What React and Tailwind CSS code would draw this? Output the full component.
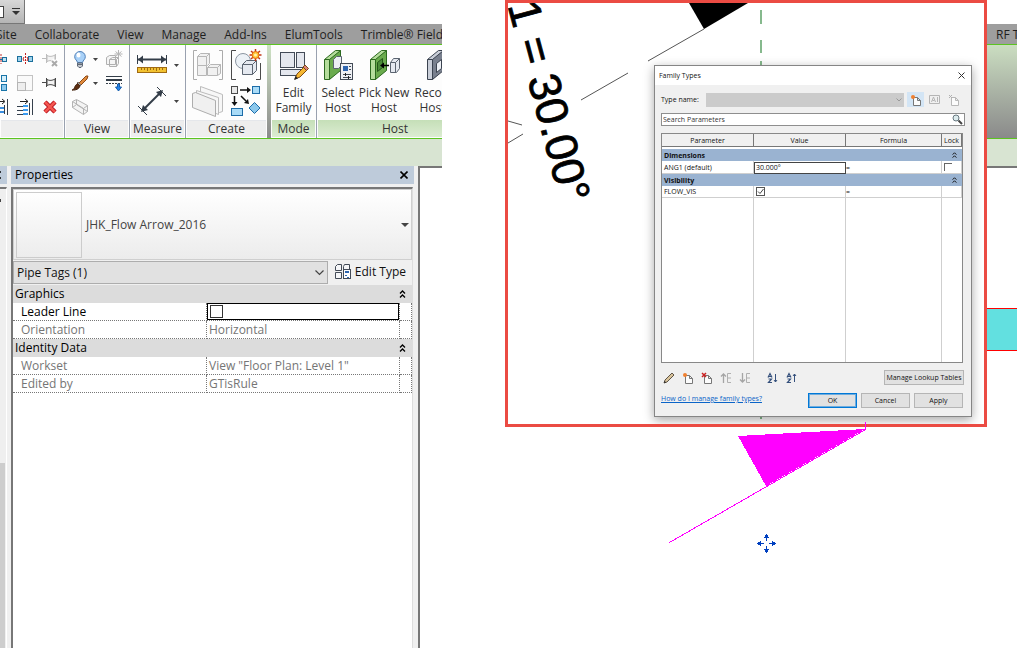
import clsx from 'clsx';

const TABS = ['Site', 'Collaborate', 'View', 'Manage', 'Add-Ins', 'ElumTools', 'Trimble® Field'];

function Caret() {
  return (
    <svg width="5" height="3" viewBox="0 0 5 3" className="shrink-0">
      <path d="M0 0h5L2.5 3z" fill="#444" />
    </svg>
  );
}

function Icon({ size = 18, children }) {
  return (
    <svg width={size} height={size} viewBox={`0 0 ${size} ${size}`} fill="none" className="block shrink-0">
      {children}
    </svg>
  );
}

/* ---------- ribbon icons ---------- */

function SplitEdgeIcon() {
  return (
    <svg width="8" height="16" viewBox="0 0 8 16" fill="none" className="block">
      <path d="M1 3v10" stroke="#c03030" strokeDasharray="2 1" />
      <path d="M0 8.500h3" stroke="#1b6f9c" />
      <rect x="2.500" y="6.500" width="4" height="4" fill="#bfe3f5" stroke="#1b6f9c" />
    </svg>
  );
}

function ArrayIcon() {
  return (
    <svg width="8" height="18" viewBox="0 0 8 18" fill="none" className="block">
      <rect x="1.500" y="1.500" width="5" height="6" fill="#d5effa" stroke="#1874a8" />
      <rect x="1.500" y="10.500" width="5" height="6" fill="#8cc8ec" stroke="#1874a8" />
    </svg>
  );
}

function TrimIcon() {
  return (
    <svg width="8" height="18" viewBox="0 0 8 18" fill="none" className="block">
      <path d="M0 3.500h4M2 1l3 2.500L2 6" stroke="#222" />
      <path d="M0 10h4M0 14h4" stroke="#3b8fe0" strokeWidth="2" />
      <path d="M4.500 7v9M7.500 1v16" stroke="#36404c" />
    </svg>
  );
}

function MirrorIcon() {
  return (
    <Icon>
      <path d="M9.500 3v12" stroke="#c02020" strokeDasharray="2 1" />
      <rect x="1.500" y="6.500" width="4" height="5" fill="#9fd3ec" stroke="#1b6f9c" />
      <rect x="12.500" y="6.500" width="4" height="5" fill="#9fd3ec" stroke="#1b6f9c" />
      <path d="M8 7l-1 2 1 2M11 7l1 2-1 2" stroke="#c02020" />
    </Icon>
  );
}

function ScaleIcon() {
  return (
    <Icon>
      <rect x="1.500" y="1.500" width="15" height="15" fill="#fafafa" stroke="#c3c3c3" />
      <rect x="1.500" y="8.500" width="8" height="8" fill="#eee" stroke="#b5b5b5" />
    </Icon>
  );
}

function ExtendIcon() {
  return (
    <Icon>
      <path d="M4 3.500h8M9 1l3 2.500L9 6" stroke="#222" />
      <path d="M1 8.500h10M1 12.500h10M1 16.500h10" stroke="#333f4d" />
      <path d="M7 8h5M7 12h5M7 16h5" stroke="#3b9bf0" strokeWidth="2" />
      <path d="M13.500 5v12M16.500 1v16" stroke="#36404c" />
    </Icon>
  );
}

function PinShape({ color }) {
  return (
    <>
      <path d="M1 8.500h4M5.500 4v9M14.500 4v9" stroke={color} />
      <path d="M6 5.500c2.500 1.500 5.500 1 8-.5v7c-2.500-1.500-5.500-2-8-.5z" fill="#f3f3f3" stroke={color} />
    </>
  );
}

function UnpinIcon() {
  return (
    <Icon>
      <PinShape color="#bdbdbd" />
      <path d="M11 10l6 6M17 10l-6 6" stroke="#fff" strokeWidth="4" />
      <path d="M11 11l5 5M16 11l-5 5" stroke="#aaa" strokeWidth="2" />
    </Icon>
  );
}

function DeleteIcon() {
  return (
    <Icon>
      <path d="M4 4l10 10M14 4L4 14" stroke="#b3121d" strokeWidth="4.500" />
      <path d="M4 4l10 10M14 4L4 14" stroke="#f4564f" strokeWidth="2.500" />
    </Icon>
  );
}

function BulbIcon() {
  return (
    <Icon>
      <path d="M9 1.500a5.300 5.300 0 0 0-5.300 5.200c0 3 2.300 3.300 2.800 5.800h5c.5-2.500 2.800-2.800 2.800-5.800A5.300 5.300 0 0 0 9 1.500z" fill="#a8d1f8" stroke="#4e7fb8" />
      <ellipse cx="7.500" cy="5" rx="2" ry="2.500" fill="#fff" />
      <path d="M6.500 13h5v3l-1.500 1.500H8L6.500 16z" fill="#c5c9cf" stroke="#5e6877" />
      <path d="M6.500 14.500h5" stroke="#5e6877" />
    </Icon>
  );
}

function BrushIcon() {
  return (
    <Icon>
      <path d="M8 9l7-7 2 0-1 3-6 6z" fill="#e08a3c" stroke="#8c4a17" />
      <path d="M7 8l3 3-1 1-3-3z" fill="#ddd" stroke="#777" />
      <path d="M1 16c3 0 2-5 6-6.500l2 2.500c-1 3-4 4.500-8 4z" fill="#5d2f12" stroke="#43220d" />
    </Icon>
  );
}

function HiddenBoxesIcon() {
  return (
    <Icon>
      <path d="M1.500 7.500l3-2h6v9h-9zM4.500 9.500h7v7h-7zM4.500 9.500l3-2h6l-2 2M13.500 7.500v6l-2 3" fill="#f5f5f5" stroke="#b0b0b0" />
      <path d="M13.500 0v8M9.500 4h8M10.500 1.500l6 5M16.500 1.500l-6 5" stroke="#b5b5b5" />
    </Icon>
  );
}

function LineWeightIcon() {
  return (
    <Icon>
      <path d="M1 2.500h16" stroke="#333d48" />
      <path d="M1 6h16" stroke="#333d48" strokeWidth="2" />
      <path d="M1 9.500h16" stroke="#333d48" strokeDasharray="2 1" />
      <path d="M14.500 10v3h2l-3 4-3-4h2v-3z" fill="#2684ea" stroke="#155cab" />
    </Icon>
  );
}

function WireBoxIcon() {
  return (
    <Icon>
      <path d="M1.500 3.500l4-2 11 6v6l-4 3-11-7z" fill="#f4f4f4" stroke="#b4b4b4" />
      <path d="M1.500 3.500l11 7v6M12.500 10.500l4-3M5.500 1.500v5l11 7M1.500 9.500l4-3" stroke="#b4b4b4" />
    </Icon>
  );
}

function RulerIcon() {
  return (
    <Icon size={32}>
      <path d="M2 10.500h28" stroke="#333d48" strokeWidth="2" />
      <path d="M1.500 6v9M30.500 6v9" stroke="#333d48" />
      <path d="M2 10.500l5-4v8zM30 10.500l-5-4v8z" fill="#333d48" />
      <rect x="1.500" y="18.500" width="29" height="5" fill="#f2c230" stroke="#a06a12" />
      <path d="M5.500 19v2M8.500 19v2M11.500 19v3M14.500 19v2M17.500 19v2M20.500 19v3M23.500 19v2M26.500 19v2" stroke="#a06a12" />
    </Icon>
  );
}

function AlignedDimIcon() {
  return (
    <Icon size={32}>
      <path d="M7 25L25 7" stroke="#333d48" strokeWidth="2" />
      <path d="M2 21l9 9M21 2l9 9" stroke="#333d48" />
      <path d="M5 27l2-7 5 5zM27 5l-7 2 5 5z" fill="#333d48" />
    </Icon>
  );
}

function GroupIcon() {
  return (
    <Icon size={32}>
      <path d="M5 1.500H1.500v29H5M27 1.500h3.500v29H27" stroke="#ababab" />
      <path d="M5.500 7.500l3-3h9v10l-2 2h-10zM5.500 7.500h9v9M14.500 7.500l3-3" fill="#f1f1f1" stroke="#b6b6b6" />
      <path d="M5.500 16.500h9v10h-9zM15.500 18.500l3-3h10v9l-3 2h-10zM15.500 18.500h10v8M25.500 18.500l3-3" fill="#f1f1f1" stroke="#b6b6b6" />
    </Icon>
  );
}

function SimilarIcon() {
  return (
    <Icon size={32}>
      <path d="M8.500 1.500l22 8v17l-3 1-19-8z" fill="#f7f7f7" stroke="#bcbcbc" />
      <path d="M4.500 5.500l22 7v17l-22-9z" fill="#f7f7f7" stroke="#bcbcbc" />
      <path d="M.5 8.500l3-1 20 8v16l-23-9z" fill="#f0f0f0" stroke="#adadad" />
    </Icon>
  );
}

function CreateGroupIcon() {
  return (
    <Icon size={32}>
      <path d="M6 1.500H1.500v29H6M26 30.500h4.500V14" stroke="#4a4a4a" />
      <circle cx="13" cy="12" r="7.500" fill="#edf2f7" stroke="#8b95a1" />
      <path d="M12.500 15.500l4-4h10v10l-4 4h-10zM12.500 15.500h10v10M22.500 15.500l4-4" fill="#e5e9f0" stroke="#5b6470" />
      <path d="M25.500 0v12M19.500 6h12M21 2l9 8M30 2l-9 8" stroke="#c23616" strokeWidth="1.500" />
      <circle cx="25.500" cy="6" r="3.500" fill="#ffc234" stroke="#e46b12" />
      <circle cx="25.500" cy="6" r="1.500" fill="#fff3b0" />
    </Icon>
  );
}

function AssemblyIcon() {
  return (
    <Icon size={32}>
      <rect x="1.500" y="1.500" width="6" height="7" fill="#e8e8e8" stroke="#4a4a4a" />
      <rect x="22.500" y="1.500" width="7" height="7" fill="#a9dbf7" stroke="#1c6ca8" />
      <rect x="1.500" y="23.500" width="11" height="7" fill="#a9dbf7" stroke="#1c6ca8" />
      <path d="M24.500 17.500l5.500 5.500-5.500 5.500L19 23z" fill="#8cc8ec" stroke="#1c6ca8" />
      <path d="M10 5h8M4.500 11v6M11 11l5 5" stroke="#111" strokeWidth="1.500" />
      <path d="M21 5l-4-3v6zM4.500 21l-3-4h6zM19 19l-5-1 4-4z" fill="#111" />
    </Icon>
  );
}

function EditFamilyIcon() {
  return (
    <Icon size={32}>
      <rect x="2.500" y="3.500" width="14" height="15" fill="#e4e7ee" stroke="#434b57" />
      <rect x="18.500" y="3.500" width="8" height="15" fill="#e4e7ee" stroke="#434b57" />
      <rect x="2.500" y="20.500" width="20" height="6" fill="#e4e7ee" stroke="#434b57" />
      <path d="M17 30l2-5 8-8 3 3-8 8z" fill="#f5b731" stroke="#7d4a14" />
      <path d="M27 16l3.500 3.500-2 2-3.500-3.500z" fill="#d9807a" stroke="#7d4a14" />
      <path d="M16 31l1.500-4 2.500 2.500z" fill="#222" />
    </Icon>
  );
}

function WallShape({ front, side, edge }) {
  return (
    <>
      <path d="M2.500 10.500l11-9h5l-4 4v18l-7 7h-5z" fill={front} stroke={edge} />
      <path d="M7.500 10.500l11-9v20l-11 9z" fill={side} stroke={edge} />
      <path d="M2.500 10.500h5" stroke={edge} />
    </>
  );
}

function SelectHostIcon() {
  return (
    <Icon size={32}>
      <WallShape front="#b5dd9c" side="#6aab4d" edge="#2c6a1f" />
      <path d="M11.500 10.500l3-3h5v9l-3 3h-5z" fill="#eceff4" stroke="#5b6470" />
      <rect x="18.500" y="14.500" width="12" height="16" fill="#eff1f5" stroke="#434b57" />
      <rect x="21" y="17" width="5" height="5" fill="#2f66b0" />
      <path d="M27 17.500h2M27 20.500h2M21 25.500h8M21 28.500h8" stroke="#434b57" />
      <path d="M23.500 24v3M26.500 27v3" stroke="#222" />
    </Icon>
  );
}

function PickHostIcon() {
  return (
    <Icon size={32}>
      <WallShape front="#b5dd9c" side="#6aab4d" edge="#2c6a1f" />
      <path d="M9.500 13.500l5-4v9l-5 4z" fill="#4c8c3a" stroke="#24561a" />
      <path d="M14 16.500h7" stroke="#000" strokeWidth="1.500" />
      <path d="M12 16.500l4-3v6z" fill="#000" />
      <path d="M22.500 13.500l3-4h6v10l-3 4h-6zM22.500 13.500h5v10M27.500 13.500l4-4" fill="#e5e9f0" stroke="#5b6470" />
    </Icon>
  );
}

function ReconcileIcon() {
  return (
    <Icon size={32}>
      <WallShape front="#c9ced8" side="#79808e" edge="#3b4350" />
      <path d="M11.500 14.500l5-4v9l-5 4z" fill="#eceff4" stroke="#3b4350" />
    </Icon>
  );
}

/* ---------- ribbon ---------- */

function IconButton({ label, children }) {
  return (
    <button type="button" aria-label={label} className="flex h-6 items-center justify-center">
      {children}
    </button>
  );
}

function BigButton({ lines, className, children }) {
  return (
    <button type="button" className={clsx('flex shrink-0 flex-col items-center pt-1 leading-[15px]', className)}>
      {children}
      <span className="mt-1 whitespace-nowrap">
        {lines[0]}
        <br />
        {lines[1]}
      </span>
    </button>
  );
}

function Panel({ title, className, green, children }) {
  return (
    <section className={clsx('flex h-[93px] shrink-0 flex-col border-gray-400 bg-[#fdfdfd]', className)}>
      <div className="h-[75px]">{children}</div>
      <h2
        className={clsx(
          'mx-px h-[17px] text-center leading-4',
          green ? 'bg-linear-to-b from-[#c5dfb8] to-[#dcecd2] pt-px' : 'border-t border-gray-200 bg-[#eeeeee]'
        )}
      >
        {title}
      </h2>
    </section>
  );
}

function Ribbon() {
  return (
    <div className="w-[442px] shrink-0 overflow-hidden">
      <nav className="flex h-5 gap-[18px] bg-[#9e9e9e] text-[#1e1e1e]">
        {TABS.map((tab) => (
          <a key={tab} href="#tab" className="whitespace-nowrap leading-[21px] first:-ml-1">
            {tab}
          </a>
        ))}
      </nav>
      <div className="flex border-y border-[#5cc421] text-[#333]">
        <Panel className="w-[65px] border-r">
          <div className="grid grid-cols-[12px_25px_26px] pt-0.5">
            <button type="button" aria-label="Split" className="flex h-6 items-center"><SplitEdgeIcon /></button>
            <IconButton label="Mirror"><MirrorIcon /></IconButton>
            <IconButton label="Unpin"><UnpinIcon /></IconButton>
            <button type="button" aria-label="Array" className="flex h-6 items-center"><ArrayIcon /></button>
            <IconButton label="Scale"><ScaleIcon /></IconButton>
            <IconButton label="Pin"><Icon><PinShape color="#4a4a4a" /></Icon></IconButton>
            <button type="button" aria-label="Trim" className="flex h-6 items-center"><TrimIcon /></button>
            <IconButton label="Extend"><ExtendIcon /></IconButton>
            <IconButton label="Delete"><DeleteIcon /></IconButton>
          </div>
        </Panel>
        <Panel title="View" className="w-[65px] border-r">
          <div className="grid grid-cols-[22px_9px_28px] pt-0.5 pl-1">
            <IconButton label="Hide"><BulbIcon /></IconButton>
            <IconButton label="Hide options"><Caret /></IconButton>
            <IconButton label="Displace"><HiddenBoxesIcon /></IconButton>
            <IconButton label="Override"><BrushIcon /></IconButton>
            <IconButton label="Override options"><Caret /></IconButton>
            <IconButton label="Linework"><LineWeightIcon /></IconButton>
            <IconButton label="Selection box"><WireBoxIcon /></IconButton>
          </div>
        </Panel>
        <Panel title="Measure" className="w-14 border-r">
          <div className="pt-0.5 pl-1.5">
            <button type="button" aria-label="Measure" className="flex h-9 items-center gap-1.5"><RulerIcon /><Caret /></button>
            <button type="button" aria-label="Dimension" className="flex h-9 items-center gap-1.5"><AlignedDimIcon /><Caret /></button>
          </div>
        </Panel>
        <Panel title="Create" className="w-[81px]">
          <div className="grid grid-cols-[32px_32px] items-center gap-x-1.5 gap-y-1 pt-1 pl-1.5">
            <button type="button" aria-label="Assembly"><GroupIcon /></button>
            <button type="button" aria-label="Create group"><CreateGroupIcon /></button>
            <button type="button" aria-label="Parts"><SimilarIcon /></button>
            <button type="button" aria-label="Create similar"><AssemblyIcon /></button>
          </div>
        </Panel>
        <div className="w-1 shrink-0 bg-linear-to-b from-[#cfe3c5] to-[#8b8b8b]" />
        <Panel title="Mode" green className="w-[46px] border-r">
          <BigButton lines={['Edit', 'Family']} className="w-full"><EditFamilyIcon /></BigButton>
        </Panel>
        <Panel title="Host" green className="w-[156px]">
          <div className="flex">
            <BigButton lines={['Select', 'Host']} className="w-[42px]"><SelectHostIcon /></BigButton>
            <BigButton lines={['Pick New', 'Host']} className="w-[50px]"><PickHostIcon /></BigButton>
            <BigButton lines={['Reconcile', 'Hosting']} className="w-16"><ReconcileIcon /></BigButton>
          </div>
        </Panel>
      </div>
      <div className="h-[27px] bg-[#d8e4d2]" />
    </div>
  );
}

function RibbonEnd() {
  return (
    <div className="w-[34px] shrink-0 overflow-hidden">
      <div className="h-5 bg-[#9e9e9e] pl-[13px] leading-[21px] whitespace-nowrap text-[#1e1e1e]">RF Tools</div>
      <div className="h-[95px] border-y border-[#5cc421] bg-linear-to-b from-[#cbdec1] to-[#8a8a8a]" />
      <div className="h-[27px] bg-[#d8e4d2]" />
    </div>
  );
}

/* ---------- properties palette ---------- */

function Chevrons({ className }) {
  return (
    <svg width="7" height="8" viewBox="0 0 7 8" fill="none" className={className}>
      <path d="M1 3.500L3.500 1 6 3.500M1 7.500L3.500 5 6 7.500" stroke="currentColor" strokeWidth="1.300" />
    </svg>
  );
}

function GroupRow({ title }) {
  return (
    <tr className="h-[18px] bg-[#dcdcdc]">
      <th colSpan={3} scope="colgroup" className="p-0 font-normal">
        <div className="flex items-center justify-between pr-1.5 pl-0.5 leading-4">
          {title}
          <Chevrons />
        </div>
      </th>
    </tr>
  );
}

function PropRow({ name, children, active }) {
  return (
    <tr className={clsx('h-[18px]', active ? 'text-black' : 'text-[#757575]')}>
      <th scope="row" className="border-r border-b border-dotted border-[#777] p-0 pl-2 font-normal">{name}</th>
      <td className="border-r border-b border-dotted border-[#777] p-0">{children}</td>
      <td className="border-r border-b border-dotted border-[#777] p-0" />
    </tr>
  );
}

function Properties() {
  return (
    <aside className="flex w-[403px] shrink-0 flex-col">
      <header className="flex h-[18px] items-center justify-between bg-[#becbda] pr-0.5 pl-1 text-black">
        <h2>Properties</h2>
        <button type="button" aria-label="Close" className="p-1">
          <svg width="8" height="8" viewBox="0 0 8 8" className="block">
            <path d="M.5.500l7 7M7.500.500l-7 7" stroke="#000" strokeWidth="1.600" />
          </svg>
        </button>
      </header>
      <div className="mt-[3px] mr-px flex-1 border-t-2 border-r border-l-2 border-t-[#777] border-r-[#ddd] border-l-[#777] bg-white">
        <button type="button" className="flex h-[71px] w-full items-center border border-[#cfcfcf] bg-linear-to-b from-white to-[#ececec] px-0.5 text-left text-[#444]">
          <span className="h-[66px] w-[66px] border border-[#ccc]" />
          <span className="flex-1 pl-1">JHK_Flow Arrow_2016</span>
          <svg width="8" height="4" viewBox="0 0 8 4"><path d="M0 0h8L4 4z" fill="#444" /></svg>
        </button>
        <div className="flex h-[25px] items-center gap-1.5 bg-[#f0f0f0] pr-1.5">
          <div className="relative flex-1">
            <select aria-label="Filter" className="block h-[23px] w-full appearance-none rounded-none border border-[#adadad] bg-[#e1e1e1] pl-[3px] text-[#111]">
              <option>Pipe Tags (1)</option>
            </select>
            <svg width="9" height="6" viewBox="0 0 9 6" fill="none" className="pointer-events-none absolute top-[9px] right-1">
              <path d="M.5.500l4 4 4-4" stroke="#444" strokeWidth="1.200" />
            </svg>
          </div>
          <button type="button" className="flex items-center gap-1 pb-0.5 text-[#111]">
            <svg width="17" height="17" viewBox="0 0 17 17" fill="none">
              <path d="M1.500 3.500l2-2h4v6h-6zM9.500 3.500l1-2h5v5h-6zM1.500 9.500h6v6h-6z" fill="#f5f6f8" stroke="#434b57" />
              <rect x="9.500" y="6.500" width="7" height="9" fill="#fff" stroke="#434b57" />
              <rect x="11" y="8" width="4" height="2" fill="#2f66b0" />
              <path d="M11 12.500h2M13 14.500h2" stroke="#2f66b0" />
            </svg>
            Edit Type
          </button>
        </div>
        <table className="w-full table-fixed border-separate border-spacing-0 text-left leading-4">
          <colgroup>
            <col className="w-[194px]" />
            <col />
            <col className="w-3" />
          </colgroup>
          <tbody>
            <GroupRow title="Graphics" />
            <PropRow name={<label htmlFor="leader">Leader Line</label>} active>
              <div className="flex h-[17px] items-center border border-black pl-0.5">
                <input id="leader" type="checkbox" className="h-[13px] w-[13px] appearance-none border border-[#333] bg-white" />
              </div>
            </PropRow>
            <PropRow name="Orientation"><span className="pl-0.5">Horizontal</span></PropRow>
            <GroupRow title="Identity Data" />
            <PropRow name="Workset"><span className="pl-0.5">View "Floor Plan: Level 1"</span></PropRow>
            <PropRow name="Edited by"><span className="pl-0.5">GTisRule</span></PropRow>
          </tbody>
        </table>
      </div>
    </aside>
  );
}

function BrowserEdge() {
  return (
    <div className="mr-1 flex w-[7px] shrink-0 flex-col overflow-hidden bg-[#f0f0f0]">
      <div className="flex h-[18px] items-center bg-[#becbda]">
        <svg width="2" height="8" viewBox="0 0 2 8"><path d="M0 1h1M0 7h1" stroke="#000" strokeWidth="1.500" /></svg>
      </div>
      <div className="mt-[3px] flex flex-1 flex-col border-t-2 border-r border-t-[#777] border-r-white">
        <div className="h-[274px] bg-[#efefef] pt-2.5"><div className="h-[3px] w-px bg-[#444]" /></div>
        <div className="w-[5px] flex-1 bg-[#cdcdcd]" />
      </div>
    </div>
  );
}

/* ---------- family types dialog ---------- */

function PageShape({ color = '#777', children }) {
  return (
    <svg width="12" height="12" viewBox="0 0 12 12" fill="none" className="block">
      <path d="M3.500 3.500h4l3 3v5h-7zM7.500 3.500v3h3" fill="#fcfcfc" stroke={color} />
      {children}
    </svg>
  );
}

function SortArrow({ up }) {
  return <path d={up ? 'M9.500 10V2M8 4l1.500-2L11 4' : 'M9.500 2v8M8 8l1.500 2L11 8'} stroke="#35507c" />;
}

function SortIcon({ up }) {
  return (
    <svg width="12" height="12" viewBox="0 0 12 12" fill="none" className="block">
      <path d="M2 5.500L4 1.500l2 4M3 4.500h2M2.500 7h3l-3 3.500H6" stroke="#35507c" strokeWidth="1.200" />
      <SortArrow up={up} />
    </svg>
  );
}

function MoveIcon({ up }) {
  return (
    <svg width="12" height="12" viewBox="0 0 12 12" fill="none" className="block">
      <path d={up ? 'M3.500 11V2M1 4.500L3.500 2 6 4.500' : 'M3.500 1v9M1 7.500L3.500 10 6 7.500'} stroke="#a5a5a5" strokeWidth="1.300" />
      <path d="M11 1.500H7.500v9H11M7.500 6H11" stroke="#b0b0b0" />
    </svg>
  );
}

function DialogButton({ primary, className, children }) {
  return (
    <button
      type="button"
      className={clsx(
        'h-[15px] border bg-[#e1e1e1] text-center leading-[13px]',
        primary ? 'border-[#0078d7] outline outline-[#0078d7]/50 -outline-offset-2' : 'border-[#b5b5b5]',
        className
      )}
    >
      {children}
    </button>
  );
}

function ParamGroup({ title }) {
  return (
    <tr className="h-3 bg-[#9ab3d1]">
      <th colSpan={4} scope="colgroup" className="p-0 font-bold text-[#111]">
        <div className="flex items-center justify-between pr-1 pl-0.5">
          {title}
          <Chevrons className="h-1.5" />
        </div>
      </th>
    </tr>
  );
}

function FamilyTypes() {
  const cell = 'border-r border-b border-[#cfcfcf] p-0';
  const head = 'border-r border-b border-[#777] bg-[#f0f0f0] p-0 text-center font-normal';
  return (
    <div
      role="dialog"
      aria-label="Family Types"
      className="absolute top-[62px] left-[146px] flex h-[352px] w-[318px] flex-col border border-[#858585] bg-[#f0f0f0] text-[7px] leading-[11px] text-[#111] shadow-[0_3px_10px_rgba(0,0,0,0.35)]"
    >
      <header className="flex h-[19px] shrink-0 items-center justify-between bg-white pr-1.5 pl-1">
        <h2>Family Types</h2>
        <button type="button" aria-label="Close">
          <svg width="7" height="7" viewBox="0 0 7 7" className="block"><path d="M.5.500l6 6M6.500.500l-6 6" stroke="#333" /></svg>
        </button>
      </header>
      <div className="flex flex-1 flex-col px-1.5 pt-[7px]">
        <div className="flex h-[15px] items-center">
          <label htmlFor="type-name" className="w-[45px]">Type name:</label>
          <div className="relative mr-[3px] flex-1">
            <select id="type-name" disabled className="block h-3.5 w-full appearance-none bg-[#cbcbcb]" />
            <svg width="6" height="4" viewBox="0 0 6 4" fill="none" className="absolute top-[5px] right-0.5"><path d="M.5.500L3 3 5.500.500" stroke="#999" /></svg>
          </div>
          <div className="flex gap-0.5 pr-[3px]">
            <button type="button" aria-label="New type" className="flex h-[15px] w-[17px] items-center justify-center bg-[#d3e5f5]">
              <PageShape><circle cx="3" cy="3" r="2" fill="#f08030" /></PageShape>
            </button>
            <button type="button" aria-label="Rename type" className="flex h-[15px] w-[17px] items-center justify-center">
              <svg width="11" height="9" viewBox="0 0 11 9" fill="none">
                <path d="M.5.500h10v8H.5zM2.500 7l2-5 2 5M3.500 5.500h2M8.500 2v5" stroke="#b5b5b5" />
              </svg>
            </button>
            <button type="button" aria-label="Delete type" className="flex h-[15px] w-[17px] items-center justify-center">
              <PageShape color="#b8b8b8"><path d="M1 1l3 3M4 1L1 4" stroke="#b0b0b0" /></PageShape>
            </button>
          </div>
        </div>
        <div className="mt-1.5 flex h-[13px] items-center border border-[#8e8e8e] bg-white pr-px">
          <input aria-label="Search Parameters" placeholder="Search Parameters" className="h-[11px] min-w-0 flex-1 pl-px placeholder:text-[#333]" />
          <svg width="11" height="11" viewBox="0 0 11 11" fill="none">
            <circle cx="4" cy="4" r="3" fill="#dcebed" stroke="#687880" />
            <path d="M6.500 6.500l3.500 3.500" stroke="#444" strokeWidth="2" />
          </svg>
        </div>
        <table className="mt-[7px] mr-0.5 table-fixed border-separate border-spacing-0 border border-[#888] bg-white text-left">
          <colgroup>
            <col className="w-[92px]" />
            <col className="w-[92px]" />
            <col />
            <col className="w-5" />
          </colgroup>
          <thead>
            <tr className="h-[13px]">
              <th className={head}>Parameter</th>
              <th className={head}>Value</th>
              <th className={head}>Formula</th>
              <th className={head}>Lock</th>
            </tr>
          </thead>
          <tbody>
            <tr className="h-0.5"><td colSpan={4} className="p-0" /></tr>
            <ParamGroup title="Dimensions" />
            <tr className="h-[13px]">
              <th scope="row" className={clsx(cell, 'pl-0.5 font-normal')}>ANG1 (default)</th>
              <td className="p-0">
                <input aria-label="ANG1 value" defaultValue="30.000°" className="block h-3 w-full border border-[#444] bg-white pl-px" />
              </td>
              <td className={cell}>=</td>
              <td className={cell}>
                <input type="checkbox" aria-label="Lock ANG1" className="ml-0.5 block h-2 w-2 appearance-none border-t border-l border-[#666]" />
              </td>
            </tr>
            <ParamGroup title="Visibility" />
            <tr className="h-3">
              <th scope="row" className={clsx(cell, 'pl-0.5 font-normal')}>FLOW_VIS</th>
              <td className={cell}>
                <label className="relative ml-0.5 block h-[9px] w-[9px]">
                  <input type="checkbox" aria-label="FLOW_VIS" defaultChecked className="block h-[9px] w-[9px] appearance-none border border-[#555] bg-white" />
                  <svg width="9" height="9" viewBox="0 0 9 9" fill="none" className="absolute inset-0"><path d="M2 4.500l2 2L7.500 2" stroke="#444" /></svg>
                </label>
              </td>
              <td className={cell}>=</td>
              <td className={cell} />
            </tr>
            <tr className="h-[164px]">
              <td className="border-r border-[#cfcfcf]" />
              <td className="border-r border-[#cfcfcf]" />
              <td className="border-r border-[#cfcfcf]" />
              <td />
            </tr>
          </tbody>
        </table>
        <div className="mt-[7px] flex items-center gap-[7px] pr-px pl-0.5">
          <button type="button" aria-label="Edit parameter">
            <svg width="12" height="12" viewBox="0 0 12 12" fill="none" className="block">
              <path d="M1 11l1-3 7-7 2 2-7 7z" fill="#d9c39a" stroke="#5e5548" />
              <path d="M1 11l.7-2 1.300 1.300z" fill="#222" />
            </svg>
          </button>
          <button type="button" aria-label="New parameter"><PageShape><circle cx="3" cy="3" r="2" fill="#f08030" /></PageShape></button>
          <button type="button" aria-label="Delete parameter"><PageShape><path d="M1 1l4 4M5 1L1 5" stroke="#c22" strokeWidth="1.500" /></PageShape></button>
          <button type="button" aria-label="Move up"><MoveIcon up /></button>
          <button type="button" aria-label="Move down"><MoveIcon /></button>
          <button type="button" aria-label="Sort ascending" className="ml-2"><SortIcon /></button>
          <button type="button" aria-label="Sort descending"><SortIcon up /></button>
          <DialogButton className="ml-auto w-20">Manage Lookup Tables</DialogButton>
        </div>
        <div className="mt-2 flex gap-1 pr-0.5">
          <a href="#help" className="mr-auto text-[#0a64c8] underline">How do I manage family types?</a>
          <DialogButton primary className="w-[49px]">OK</DialogButton>
          <DialogButton className="w-[49px]">Cancel</DialogButton>
          <DialogButton className="w-[49px]">Apply</DialogButton>
        </div>
      </div>
    </div>
  );
}

/* ---------- drawing area ---------- */

function Drawing() {
  return (
    <svg width="240" height="140" viewBox="0 0 240 140" fill="none" className="absolute top-[421px] left-[660px]" shapeRendering="crispEdges">
      <path d="M78 15l127-7-99 57z" fill="#f0f" />
      <path d="M9.500 121.500L205.500 8.500V1" stroke="#f0f" />
      <path d="M106.500 115v5M106.500 125v5M99 122.500h5M109 122.500h5" stroke="#0040c0" />
      <path d="M106.500 113l-3 4h6zM106.500 132l-3-4h6zM97 122.500l4-3v6zM116 122.500l-4-3v6z" fill="#0040c0" />
    </svg>
  );
}

function Inset() {
  return (
    <div className="absolute top-0 left-[505px] h-[427px] w-[482px] overflow-hidden border-3 border-[#eb4b43] bg-white">
      <svg width="476" height="421" viewBox="0 0 476 421" fill="none" className="block">
        <path d="M181 0h59l-44 26z" fill="#000" />
        <path d="M196 26l-56 32M120 70L73 97M0 118l14 4M0 140l15-9" stroke="#555" />
        <path d="M253 7v14M253 37v13M253 58v5M253 412v4" stroke="#86b98d" strokeWidth="2" />
        <text
          transform="translate(53 202) rotate(75)"
          textAnchor="end"
          fill="#000"
          stroke="#000"
          strokeWidth="0.8"
          fontSize="45"
          fontFamily="'Liberation Sans', Arial, sans-serif"
        >
          G1 = 30.00°
        </text>
      </svg>
      <FamilyTypes />
    </div>
  );
}

export default function App() {
  return (
    <div className="relative flex min-h-screen w-full flex-col overflow-hidden bg-white font-['Open_Sans','Noto_Sans',sans-serif] text-[12px] leading-4">
      <div className="flex h-6 w-[25px] items-center justify-between border-r border-b border-[#777] bg-linear-to-b from-[#d8d8d8] to-[#b5b5b5] pr-1">
        <div className="h-3 w-1 border-y border-r border-[#444] bg-white" />
        <svg width="8" height="7" viewBox="0 0 8 7"><path d="M0 0h8v1H0zM0 3h8L4 7z" fill="#333" /></svg>
      </div>
      <div className="flex justify-between">
        <Ribbon />
        <RibbonEnd />
      </div>
      <main className="flex flex-1">
        <div className="flex shrink-0 bg-[#f0f0f0] pr-1">
          <BrowserEdge />
          <Properties />
        </div>
        <div className="flex flex-1 justify-between border-l-2 border-[#777]">
          <div className="h-0.5 w-[22px] bg-[#777]" />
          <div className="w-[34px]">
            <div className="h-0.5 bg-[#777]" />
            <div className="mt-[140px] h-[43px] border-y border-[#f00] bg-[#62e0e0]" />
          </div>
        </div>
      </main>
      <Inset />
      <Drawing />
    </div>
  );
}
